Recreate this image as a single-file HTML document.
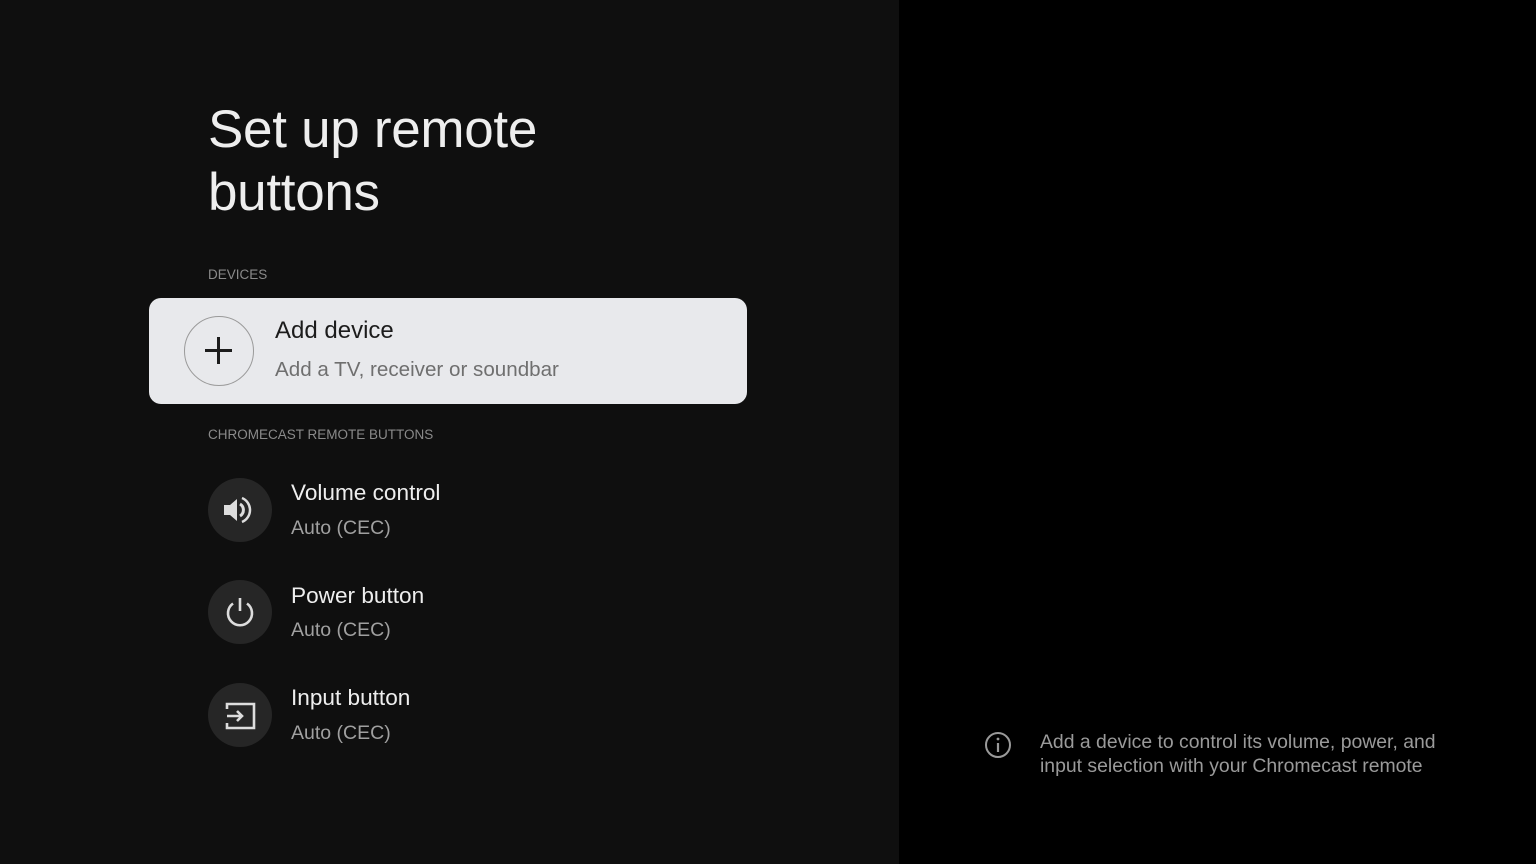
<!DOCTYPE html>
<html><head><style>
body{margin:0;width:1536px;height:864px;background:#000;font-family:"Liberation Sans",sans-serif;position:relative;overflow:hidden}
.left{position:absolute;left:0;top:0;width:899px;height:864px;background:#0f0f0f}
.t{position:absolute;left:208px;top:98px;color:#eee;font-size:53px;line-height:63px;letter-spacing:-0.3px}
.h{position:absolute;left:208px;color:#8a8a8a;font-size:13.5px}
.card{position:absolute;left:149px;top:298px;width:598px;height:106px;background:#e8e9ec;border-radius:12px}
.plus{position:absolute;left:35px;top:18px;width:70px;height:70px;border:1.5px solid #9a9a9a;border-radius:50%;box-sizing:border-box}
.ct{position:absolute;left:126px;top:19px;font-size:24px;color:#1c1c1c}
.cs{position:absolute;left:126px;top:60px;font-size:20.6px;color:#6f6f6f}
.ic{position:absolute;left:208px;width:64px;height:64px;border-radius:50%;background:#262626}
.ic svg{position:absolute;left:16px;top:16px}
.it{position:absolute;left:291px;font-size:22.6px;color:#eee}
.is{position:absolute;left:291px;font-size:19.5px;color:#a0a0a0}
.info{position:absolute;left:1040px;top:730px;font-size:19.4px;line-height:24px;color:#9a9a9a}
</style></head><body>
<div class="left">
<div class="t">Set up remote<br>buttons</div>
<div class="h" style="top:267px">DEVICES</div>
<div class="card"><div class="plus"><svg width="67" height="67" viewBox="0 0 67 67"><path d="M33.5 20v27M20 33.5h27" stroke="#1c1c1c" stroke-width="3"/></svg></div>
<div class="ct">Add device</div><div class="cs">Add a TV, receiver or soundbar</div></div>
<div class="h" style="top:427px">CHROMECAST REMOTE BUTTONS</div>
<div class="ic" style="top:478px"><svg width="32" height="32" viewBox="0 0 32 32"><path d="M0 11h6l7-6v22l-7-6H0z" fill="#ddd"/><path d="M16 10a7 7 0 0 1 0 12" stroke="#ddd" stroke-width="3" fill="none"/><path d="M18 4a13 13 0 0 1 0 24" stroke="#ddd" stroke-width="2.5" fill="none"/></svg></div>
<div class="it" style="top:480px">Volume control</div><div class="is" style="top:517px">Auto (CEC)</div>
<div class="ic" style="top:580px"><svg width="32" height="32" viewBox="0 0 32 32"><path d="M16 2v13" stroke="#ddd" stroke-width="2.6"/><path d="M9 7.5a12 12 0 1 0 14 0" stroke="#ddd" stroke-width="2.6" fill="none"/></svg></div>
<div class="it" style="top:583px">Power button</div><div class="is" style="top:619px">Auto (CEC)</div>
<div class="ic" style="top:683px"><svg width="32" height="32" viewBox="0 0 32 32"><path d="M3 9V4h27v24H3v-5" stroke="#ddd" stroke-width="2.6" fill="none" transform="translate(0,1)"/><path d="M3 17h15M13 12l5 5-5 5" stroke="#ddd" stroke-width="2.6" fill="none"/></svg></div>
<div class="it" style="top:685px">Input button</div><div class="is" style="top:722px">Auto (CEC)</div>
</div>
<svg style="position:absolute;left:984px;top:731px" width="28" height="28" viewBox="0 0 28 28"><circle cx="14" cy="14" r="12" stroke="#9a9a9a" stroke-width="2" fill="none"/><path d="M14 12v9" stroke="#9a9a9a" stroke-width="2.2"/><circle cx="14" cy="8" r="1.4" fill="#9a9a9a"/></svg>
<div class="info">Add a device to control its volume, power, and<br>input selection with your Chromecast remote</div>
</body></html>
